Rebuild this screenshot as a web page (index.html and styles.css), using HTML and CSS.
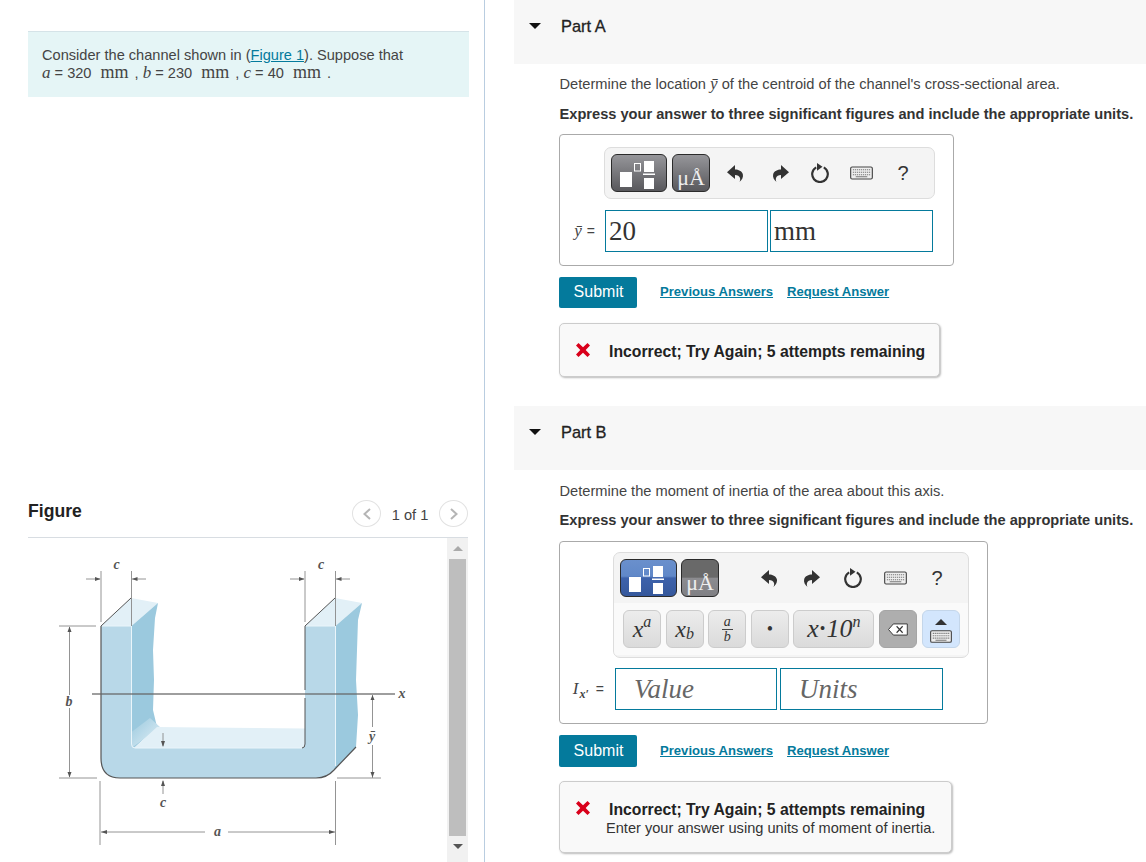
FILE: index.html
```html
<!DOCTYPE html>
<html lang="en">
<head>
<meta charset="utf-8">
<title>Part A and Part B</title>
<link rel="stylesheet" href="styles.css">
</head>
<body>
<svg class="sprite" aria-hidden="true">
  <symbol id="undo" viewBox="0 0 17 17"><path d="M8 0 L0 7.200 L8 14 V10 C10.500 10 12.400 11.200 13 13 C13.400 14.500 13 16 12.400 17 C15 15 16.600 12 15.800 9 C14.800 6 11.500 4.500 8 4.500 Z"/></symbol>
  <symbol id="redo" viewBox="0 0 17 17"><path d="M9 0 L17 7.200 L9 14 V10 C6.500 10 4.600 11.200 4 13 C3.600 14.500 4 16 4.600 17 C2 15 0.400 12 1.200 9 C2.200 6 5.500 4.500 9 4.500 Z"/></symbol>
  <symbol id="reset" viewBox="0 0 20 20"><path d="M6.200 4.400 A7.800 7.800 0 1 0 13.800 4.400" fill="none" stroke="#333" stroke-width="2.200"/><path d="M7 0 L12.500 3.800 L7 7.800 Z" fill="#333"/></symbol>
  <symbol id="kbd" viewBox="0 0 24 14"><rect x="0.700" y="0.700" width="22.600" height="12.600" rx="1.500" fill="#eee" stroke="#444" stroke-width="1.200"/><path d="M3 3.600h18M3 6.200h18M3 8.800h18" stroke="#777" stroke-width="1.200" stroke-dasharray="1.300 .8"/><path d="M6 11h12" stroke="#777" stroke-width="1.100"/></symbol>
  <symbol id="tpl" viewBox="0 0 56 38"><rect x="9" y="18" width="12" height="15" fill="#fff"/><rect x="23.500" y="9.500" width="6" height="7.500" fill="none" stroke="#fff"/><rect x="33" y="7" width="10" height="11" fill="#fff"/><rect x="32" y="19.500" width="12" height="1.500" fill="#fff"/><rect x="33" y="24" width="10" height="11" fill="#fff"/></symbol>
  <symbol id="cross" viewBox="0 0 16 16"><path d="M1 3.500 L3.500 1 L8 5.300 L12.500 1 L15 3.500 L10.700 8 L15 12.500 L12.500 15 L8 10.700 L3.500 15 L1 12.500 L5.300 8 Z" fill="#d9001b"/></symbol>
</svg>
<div class="page">
  <aside class="left">
    <div class="intro">
      <p>Consider the channel shown in (<a href="#fig">Figure 1</a>). Suppose that</p>
      <p><i class="mv">a</i> = 320 <span class="mu">mm</span> , <i class="mv">b</i> = 230 <span class="mu">mm</span> , <i class="mv">c</i> = 40 <span class="mu">mm</span> .</p>
    </div>
    <div class="fig-head" id="fig">
      <h2>Figure</h2>
      <div class="pager">
        <span class="circle"><svg width="10" height="14" viewBox="0 0 10 14"><path d="M8 2 L2.500 7 L8 12" fill="none" stroke="#b5b5b5" stroke-width="2"/></svg></span>
        <span class="count">1 of 1</span>
        <span class="circle"><svg width="10" height="14" viewBox="0 0 10 14"><path d="M2 2 L7.500 7 L2 12" fill="none" stroke="#b5b5b5" stroke-width="2"/></svg></span>
      </div>
    </div>
    <div class="fig-body">
      <svg class="drawing" width="419" height="324" viewBox="28 538 419 324">
        <defs>
          <linearGradient id="corner" x1="0" y1="0" x2="1" y2="1">
            <stop offset="0" stop-color="#9bc9de"/>
            <stop offset="1" stop-color="#e2f0f7"/>
          </linearGradient>
        </defs>
        <!-- tops -->
        <path d="M101 626 L131 598 L158 603 L131.500 626 Z" fill="#e2f0f7"/>
        <path d="M305 626 L335 598 L362 603 L335.500 626 Z" fill="#e2f0f7"/>
        <!-- inner left wall -->
        <path d="M131.500 626 L158 603 L155 618 L153 650 L154 680 L153 710 L157 727 L134 748 L131.500 745 Z" fill="#9bc9de"/>
        <path d="M131.500 748 L131.500 732 L150 718 L160 727 Z" fill="url(#corner)"/>
        <!-- floor -->
        <path d="M157 727 L200 727.500 L305 728.500 L305 748 L134 748 Z" fill="#e2f0f7"/>
        <!-- right wall -->
        <path d="M335.500 626 L362 603 L358 620 L357 650 L356 680 L358 715 L356 747 L334 770 Z" fill="#9bc9de"/>
        <!-- front -->
        <path d="M101 626 H131.500 V744 Q131.500 748 135 748 H302 Q305 748 305 744 V626 H335.500 V766 Q330 778 316 778 H120 Q101 778 101 758 Z" fill="#b8d8e8"/>
        <path d="M131.500 626 V744 Q131.500 748 135 748 H302" fill="none" stroke="#eaf5fa" stroke-width="1"/>
        <path d="M101 626 H131.500 M305 626 H335.500 V766" fill="none" stroke="#eaf5fa" stroke-width="1"/>
        <!-- outline -->
        <path d="M101 626 V758 Q101 778 120 778 H316 Q327 778 334 770 L356 747" fill="none" stroke="#555" stroke-width="1.200"/>
        <path d="M101 626 L131 598 M305 626 L335 598 M305 626 V690 M305 698 V744 Q305 748 302 748" fill="none" stroke="#555" stroke-width="1"/>
        <!-- x axis -->
        <path d="M92 694 H395" stroke="#666" stroke-opacity=".85" stroke-width="1.600"/>
        <!-- dimension lines -->
        <g fill="none" stroke="#888" stroke-width=".9">
          <path d="M101 571 V622 M131.500 571 V626 M305 571 V622 M335.500 571 V626"/>
          <path d="M86 579 H100 M132 579 H146 M290 579 H304 M336 579 H350"/>
          <path d="M59 626 H96 M59 778 H97 M69.500 627 V695 M69.500 708 V777"/>
          <path d="M372.500 695 V727 M372.500 745 V778 M337 778 H381"/>
          <path d="M163 733 V746 M163 781 V794"/>
          <path d="M100 781 V845 M335.500 781 V845 M101 832 H205 M228 832 H335"/>
        </g>
        <g fill="#555">
          <path d="M100.500 579 L95 577 V581 Z M132 579 L137.500 577 V581 Z M304.500 579 L299 577 V581 Z M336 579 L341.500 577 V581 Z"/>
          <path d="M69.500 626.500 L67.500 632 H71.500 Z M69.500 777.500 L67.500 772 H71.500 Z M372.500 695 L370.500 700 H374.500 Z M372.500 777.500 L370.500 772 H374.500 Z"/>
          <path d="M163 747 L161 741 H165 Z M163 780 L161 786 H165 Z M101 832 L107 830 V834 Z M335 832 L329 830 V834 Z"/>
        </g>
        <g class="fig-label">
          <text x="116.500" y="569">c</text>
          <text x="321" y="569">c</text>
          <text x="69" y="706">b</text>
          <text x="402" y="698">x</text>
          <text x="372" y="741">ȳ</text>
          <text x="163" y="807">c</text>
          <text x="217.500" y="836">a</text>
        </g>
      </svg>
      <div class="scroll">
        <span class="arr-up"></span>
        <span class="thumb"></span>
        <span class="arr-down"></span>
      </div>
    </div>
  </aside>

  <main class="right">
    <section class="part part-a">
      <header class="part-head"><span class="tri"></span><h3>Part A</h3></header>
      <p class="prompt">Determine the location <i class="mv">ȳ</i> of the centroid of the channel's cross-sectional area.</p>
      <p class="express">Express your answer to three significant figures and include the appropriate units.</p>
      <div class="answer">
        <div class="toolbar">
          <div class="tool-row">
            <span class="tbtn tpl"><svg width="56" height="38"><use href="#tpl"/></svg></span>
            <span class="tbtn unit">μÅ</span>
            <span class="cell c1"><svg width="17" height="17"><use href="#undo"/></svg></span>
            <span class="cell c2"><svg width="17" height="17"><use href="#redo"/></svg></span>
            <span class="cell c3"><svg width="20" height="20"><use href="#reset"/></svg></span>
            <span class="cell c4"><svg width="23" height="14"><use href="#kbd"/></svg></span>
            <span class="cell c5 help">?</span>
          </div>
        </div>
        <div class="entry">
          <span class="lab"><i class="mv">ȳ</i> =</span>
          <span class="field">20</span>
          <span class="field">mm</span>
        </div>
      </div>
      <div class="actions">
        <span class="submit">Submit</span>
        <a href="#a" class="act">Previous Answers</a>
        <a href="#a" class="act">Request Answer</a>
      </div>
      <div class="alert">
        <svg class="x" width="16" height="16"><use href="#cross"/></svg>
        <div class="alert-text"><strong>Incorrect; Try Again; 5 attempts remaining</strong></div>
      </div>
    </section>

    <section class="part part-b">
      <header class="part-head"><span class="tri"></span><h3>Part B</h3></header>
      <p class="prompt">Determine the moment of inertia of the area about this axis.</p>
      <p class="express">Express your answer to three significant figures and include the appropriate units.</p>
      <div class="answer">
        <div class="toolbar">
          <div class="tool-row">
            <span class="tbtn tpl on"><svg width="56" height="38"><use href="#tpl"/></svg></span>
            <span class="tbtn unit two">μÅ</span>
            <span class="cell first"><svg width="17" height="17"><use href="#undo"/></svg></span>
            <span class="cell"><svg width="17" height="17"><use href="#redo"/></svg></span>
            <span class="cell"><svg width="20" height="20"><use href="#reset"/></svg></span>
            <span class="cell"><svg width="23" height="14"><use href="#kbd"/></svg></span>
            <span class="cell help">?</span>
          </div>
          <div class="key-row">
            <span class="key"><i>x</i><sup><i>a</i></sup></span>
            <span class="key"><i>x</i><sub><i>b</i></sub></span>
            <span class="key frac"><i>a</i><i>b</i></span>
            <span class="key dot">•</span>
            <span class="key wide"><i>x</i><span class="bul">•</span><i>10</i><sup><i>n</i></sup></span>
            <span class="key back"><svg width="22" height="13" viewBox="0 0 22 14"><path d="M6 1 H21 V13 H6 L0.800 7 Z" fill="#fff" stroke="#333"/><path d="M9.500 3.500 L16 10.500 M16 3.500 L9.500 10.500" stroke="#333" stroke-width="1.200"/></svg></span>
            <span class="key kb"><svg class="caret" width="12" height="6" viewBox="0 0 12 6"><path d="M6 0 L12 6 H0 Z" fill="#333"/></svg><svg width="22" height="13"><use href="#kbd"/></svg></span>
          </div>
        </div>
        <div class="entry">
          <span class="lab"><i class="mv">I</i><sub class="lab-sub"><i>x′</i></sub> =</span>
          <span class="field ph">Value</span>
          <span class="field ph">Units</span>
        </div>
      </div>
      <div class="actions">
        <span class="submit">Submit</span>
        <a href="#b" class="act">Previous Answers</a>
        <a href="#b" class="act">Request Answer</a>
      </div>
      <div class="alert">
        <svg class="x" width="16" height="16"><use href="#cross"/></svg>
        <div class="alert-text"><strong>Incorrect; Try Again; 5 attempts remaining</strong><span class="alert-note">Enter your answer using units of moment of inertia.</span></div>
      </div>
    </section>
  </main>
</div>
</body>
</html>
```
FILE: styles.css
```css
* { box-sizing: border-box; }
html, body { margin: 0; padding: 0; height: 100%; overflow: hidden; background: #fff; }
body { font-family: "Liberation Sans", Arial, sans-serif; font-size: 14.6px; color: #333; }
p, h2, h3 { margin: 0; }
a { color: #047a9c; }
.sprite { display: none; }
.page { display: flex; height: 862px; }

.left { width: 485px; flex: none; height: 862px; padding: 31px 15px 0 28px; border-right: 1px solid #b9cde0; }
.intro { height: 66px; padding: 15px 14px 0; background: #e5f5f6; border-top: 1px solid #d5e3e8; line-height: 17px; color: #444; }
.mv { font-family: "Liberation Serif", serif; font-style: italic; font-size: 17px; }
.mu { font-family: "Liberation Serif", serif; font-size: 18px; margin: 0 2px 0 5px; }

.fig-head { display: flex; justify-content: space-between; height: 38px; margin: 403px 1px 0 0; border-bottom: 1px solid #d8dde2; }
.fig-head h2 { font-size: 17.600px; font-weight: 700; color: #222; line-height: 20px; padding-top: 1px; }
.pager { display: flex; align-items: flex-start; }
.circle { display: flex; align-items: center; justify-content: center; width: 29px; height: 27px; border: 1px solid #e2e2e2; border-radius: 50%; }
.count { width: 58px; text-align: center; line-height: 31px; color: #444; }

.fig-body { display: flex; height: 324px; }
.drawing { display: block; flex: none; }
.fig-label { font-family: "Liberation Serif", serif; font-style: italic; font-weight: 700; font-size: 14px; fill: #555; text-anchor: middle; }
.scroll { width: 21px; flex: none; background: #f1f1f1; display: flex; flex-direction: column; align-items: center; }
.arr-up { width: 0; height: 0; margin-top: 8px; border: 5px solid transparent; border-top: 0; border-bottom: 5px solid #aaa; }
.thumb { width: 17px; height: 277px; margin-top: 8px; background: #bebebe; }
.arr-down { width: 0; height: 0; margin-top: 8px; border: 5px solid transparent; border-bottom: 0; border-top: 5px solid #555; }

.right { flex: 1; min-width: 0; padding-left: 29px; }
.part-head { display: flex; height: 64px; padding: 16px 0 0 15px; background: #f7f7f7; }
.part-head h3 { font-size: 16.400px; font-weight: 500; line-height: 20px; margin-left: 20px; color: #222; -webkit-text-stroke: .3px #222; }
.tri { width: 0; height: 0; margin-top: 7px; border: 6px solid transparent; border-bottom: 0; border-top: 6px solid #111; }
.part-b { margin-top: 29px; }

.prompt, .express { margin-left: 45.500px; line-height: 20px; white-space: nowrap; }
.prompt { font-size: 14.650px; color: #444; }
.express { font-size: 14.630px; font-weight: 700; color: #333; }
.part-a .prompt { margin-top: 10px; }
.part-a .express { margin-top: 10px; }
.part-b .prompt { margin-top: 11px; }
.part-b .express { margin-top: 9px; }

.answer { margin-left: 45px; border: 1px solid #aaa; border-radius: 4px; }
.part-a .answer { width: 395px; height: 132px; margin-top: 10px; padding: 12px 0 0 44px; }
.part-b .answer { width: 429px; height: 183px; margin-top: 11px; padding: 10px 0 0 53px; }
.toolbar { background: #f4f4f4; border: 1px solid #ddd; border-radius: 7px; overflow: hidden; }
.part-a .toolbar { width: 331px; height: 52px; }
.part-b .toolbar { width: 356px; height: 106px; }
.tool-row { display: flex; align-items: center; padding: 6px 0 0 6px; }
.part-b .tool-row { height: 50px; padding: 0 0 0 6px; }
.tbtn { display: block; flex: none; height: 38px; border: 1px solid #2b2b2b; border-radius: 6px; background: linear-gradient(#96969a, #58585c); }
.tpl { width: 56px; margin-right: 5px; }
.tpl svg { display: block; margin: -1px; }
.unit { width: 38px; margin-right: 4px; color: #eee; font-family: "Liberation Serif", serif; font-size: 22px; line-height: 45px; overflow: hidden; text-align: center; white-space: nowrap; }
.on { width: 57px; background: linear-gradient(#6a90cc 0, #6088c8 45%, #3d62ab 50%, #35589c 100%); margin-right: 4px; }
.two { background: linear-gradient(#696969 0, #696969 48%, #8c8c90 50%, #808084 100%); }
.cell { display: flex; align-items: center; justify-content: center; flex: none; width: 42px; height: 38px; }
.cell svg { display: block; fill: #333; }
.c1 { width: 42px; }
.c2 { width: 48px; }
.c3 { width: 32px; }
.c4 { width: 50px; }
.c5 { width: 34px; }
.first { margin-left: 25px; }
.help { font-size: 20px; color: #333; }

.key-row { display: flex; gap: 4.600px; height: 52px; padding: 7px 0 0 9px; background: #fafafa; }
.key { display: flex; flex: none; align-items: center; justify-content: center; width: 38px; height: 38px; border: 1px solid #ccc; border-radius: 6px; background: linear-gradient(#ececec, #dadada); font-family: "Liberation Serif", serif; font-size: 24px; color: #333; }
.key sup { font-size: 16px; line-height: 0; position: relative; top: -7px; vertical-align: baseline; }
.key sub { font-size: 16px; line-height: 0; position: relative; top: 5px; vertical-align: baseline; }
.frac { flex-direction: column; font-size: 14px; line-height: 14px; }
.frac i:first-child { border-bottom: 1px solid #444; padding: 0 2px; }
.dot { font-size: 18px; }
.wide { width: 81px; font-size: 26px; }
.bul { font-size: 16px; margin: 0 1px; }
.back { background: #aeaeae; border-color: #a5a5a5; }
.kb { flex-direction: column; background: #d3e6fd; border-color: #c4d6ea; gap: 5px; padding-top: 3px; }
.kb svg { display: block; flex: none; }

.entry { display: flex; align-items: stretch; height: 42px; margin-top: 11px; gap: 2px; }
.part-a .entry { margin-left: -44px; }
.part-b .entry { margin: 10px 0 0 -53px; gap: 3px; }
.lab { display: flex; align-items: center; justify-content: flex-end; width: 43px; padding-right: 8px; color: #444; gap: 5px; font-size: 14px; }
.part-b .lab { width: 52px; gap: 0; }
.lab-sub { font-family: "Liberation Serif", serif; font-size: 12px; font-weight: 700; line-height: 0; position: relative; top: 5px; margin: 0 7px 0 1px; }
.field { display: block; width: 163px; border: 1px solid #047a9c; padding: 0 3px; font-family: "Liberation Serif", serif; font-size: 27px; line-height: 40px; color: #333; }
.ph { width: 162px; padding: 0 18px; font-style: italic; color: #666; }
.part-b .ph + .ph { width: 163px; }

.actions { display: flex; align-items: center; margin: 11px 0 0 45px; height: 31px; }
.part-b .actions { height: 32px; }
.submit { display: block; width: 78px; height: 100%; padding-left: 1px; border-radius: 2px; background: #047a9c; color: #fff; text-align: center; line-height: 29px; font-size: 16px; }
.part-b .submit { line-height: 31px; }
.act { font-size: 13.100px; font-weight: 700; margin: 0 0 1px 14px; }
.part-a .act { margin-bottom: 3px; }
.submit + .act { margin-left: 23px; }

.alert { display: flex; margin: 15px 0 0 45px; background: #f9f9f9; border: 1px solid #ccc; border-radius: 5px; box-shadow: 1px 1px 2px #bbb; }
.part-a .alert { width: 381px; height: 54px; padding: 18px 0 0 15px; }
.part-b .alert { width: 393px; height: 72px; margin-top: 14px; padding: 18px 0 0 15px; }
.x { flex: none; }
.alert-text { margin: 1px 0 0 18px; line-height: 18px; }
.alert-text strong { display: block; font-size: 15.750px; color: #222; }
.alert-note { display: block; margin-left: -3px; font-size: 14.600px; color: #333; }
```
